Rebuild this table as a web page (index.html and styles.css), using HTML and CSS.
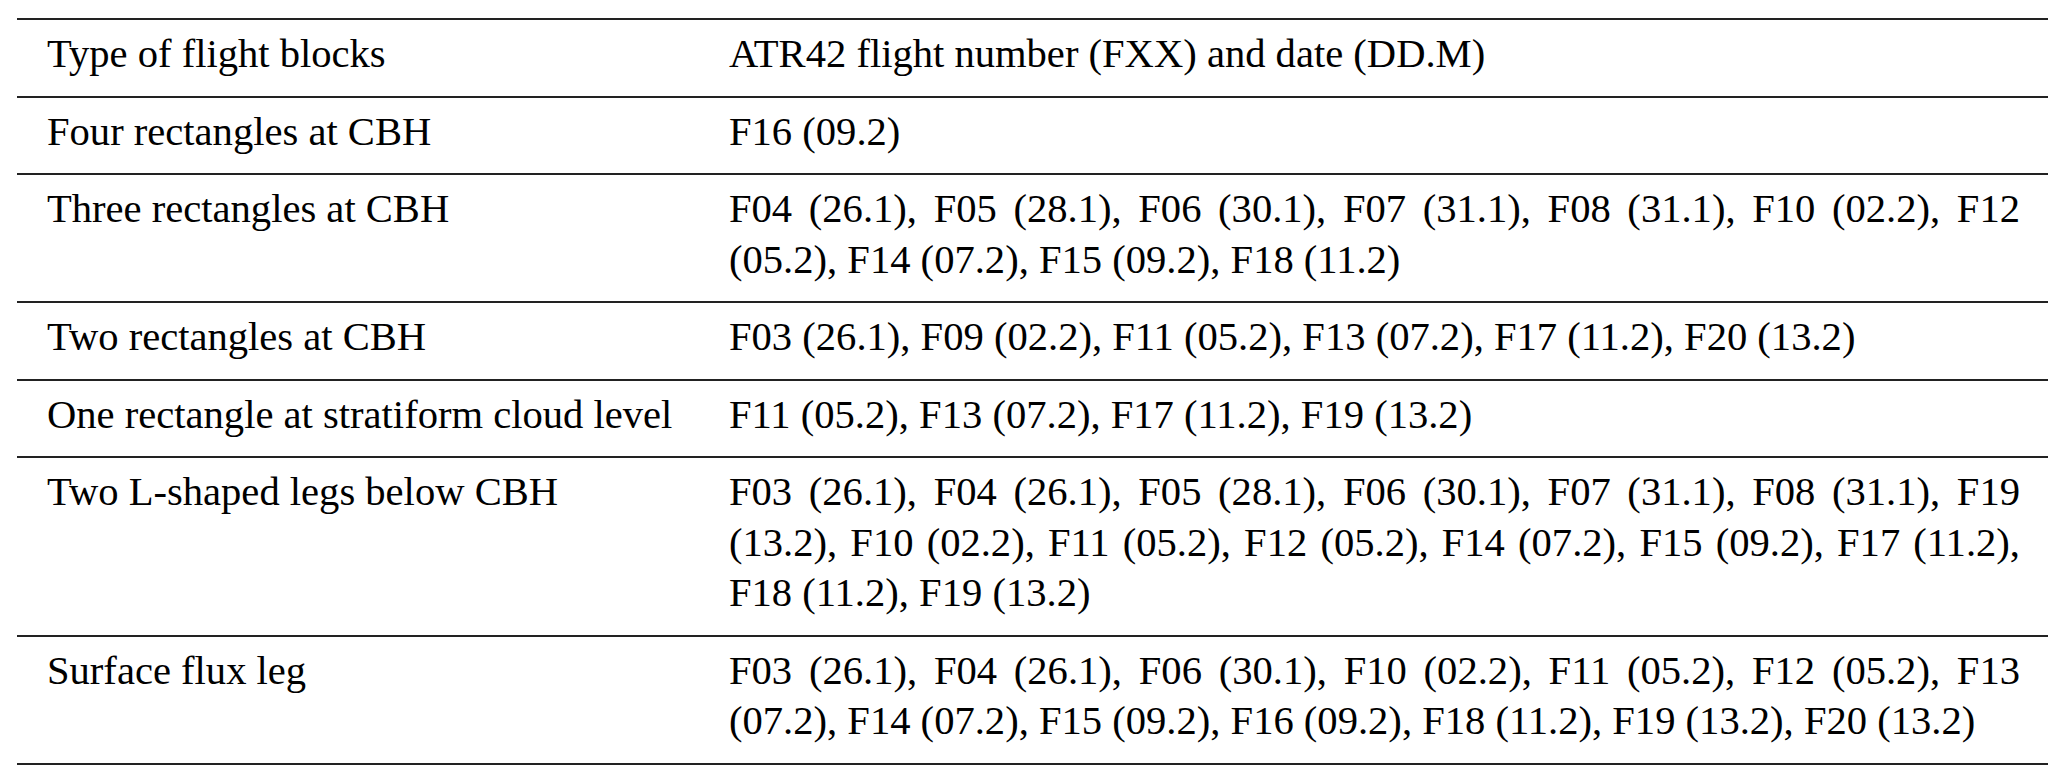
FILE: index.html
```html
<!DOCTYPE html>
<html>
  <head>
    <meta http-equiv="Content-Type" content="text/html; charset=utf-8" />
    <title>Flight blocks</title>
    <link rel="stylesheet" href="styles.css">
  </head>
  <body>
    <table class="blocks">
      <colgroup>
        <col class="col-type" />
        <col class="col-flights" />
      </colgroup>
      <thead>
        <tr>
          <th>Type of flight blocks</th>
          <th>ATR42 flight number (FXX) and date (DD.M)</th>
        </tr>
      </thead>
      <tbody>
        <tr>
          <td>Four rectangles at CBH</td>
          <td>F16 (09.2)</td>
        </tr>
        <tr>
          <td>Three rectangles at CBH</td>
          <td>F04 (26.1), F05 (28.1), F06 (30.1), F07 (31.1), F08 (31.1), F10 (02.2), F12 (05.2), F14 (07.2), F15 (09.2), F18 (11.2)</td>
        </tr>
        <tr>
          <td>Two rectangles at CBH</td>
          <td>F03 (26.1), F09 (02.2), F11 (05.2), F13 (07.2), F17 (11.2), F20 (13.2)</td>
        </tr>
        <tr>
          <td>One rectangle at stratiform cloud level</td>
          <td>F11 (05.2), F13 (07.2), F17 (11.2), F19 (13.2)</td>
        </tr>
        <tr>
          <td>Two L-shaped legs below CBH</td>
          <td>F03 (26.1), F04 (26.1), F05 (28.1), F06 (30.1), F07 (31.1), F08 (31.1), F19 (13.2), F10 (02.2), F11 (05.2), F12 (05.2), F14 (07.2), F15 (09.2), F17 (11.2), F18 (11.2), F19 (13.2)</td>
        </tr>
        <tr>
          <td>Surface flux leg</td>
          <td>F03 (26.1), F04 (26.1), F06 (30.1), F10 (02.2), F11 (05.2), F12 (05.2), F13 (07.2), F14 (07.2), F15 (09.2), F16 (09.2), F18 (11.2), F19 (13.2), F20 (13.2)</td>
        </tr>
      </tbody>
    </table>
  </body>
</html>
```

FILE: styles.css
```css
* {
  font-family: 'Liberation Serif', 'Times New Roman', Times, serif;
}
html,
body {
  margin: 0;
  padding: 0;
  background: #fff;
}
.blocks {
  width: 2031px;
  margin: 18px 0 0 17px;
  border-collapse: collapse;
  table-layout: fixed;
  color: #000;
  font-size: 40.6px;
  line-height: 50.5px;
}
.col-type {
  width: 682px;
}
.col-flights {
  width: 1349px;
}
.blocks th,
.blocks td {
  padding: 9px 28px 16px 30px;
  border-top: 2px solid #222;
  border-bottom: 2px solid #222;
  font-weight: normal;
  text-align: left;
  vertical-align: top;
}
.blocks td:first-child,
.blocks th:first-child {
  white-space: nowrap;
}
.blocks td + td {
  text-align: justify;
}
```
